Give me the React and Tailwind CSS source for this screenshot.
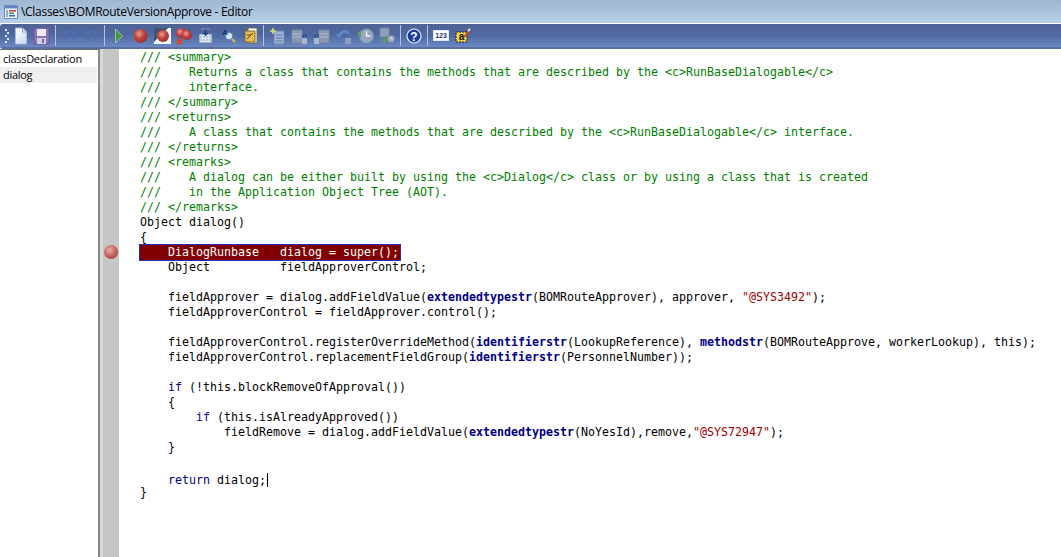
const mono = "font-['DejaVu_Sans_Mono',monospace]"

const G = ({ children }) => <span className="text-[#008000]">{children}</span>
const B = ({ children }) => <span className="font-bold text-[#00008b]">{children}</span>
const K = ({ children }) => <span className="text-[#00008b]">{children}</span>
const S = ({ children }) => <span className="text-[#a00000]">{children}</span>

const doc = [
  '/// <summary>',
  '///    Returns a class that contains the methods that are described by the <c>RunBaseDialogable</c>',
  '///    interface.',
  '/// </summary>',
  '/// <returns>',
  '///    A class that contains the methods that are described by the <c>RunBaseDialogable</c> interface.',
  '/// </returns>',
  '/// <remarks>',
  '///    A dialog can be either built by using the <c>Dialog</c> class or by using a class that is created',
  '///    in the Application Object Tree (AOT).',
  '/// </remarks>',
]

function Ball({ x = 0, y = 0, r = 6 }) {
  return <circle cx={x} cy={y} r={r} fill="url(#ball)" />
}

function Icon({ w = 16, className = '', children }) {
  return (
    <svg width={w} height="20" viewBox={`0 0 ${w} 20`} className={`shrink-0 ${className}`}>
      {children}
    </svg>
  )
}

const Sep = ({ className = '' }) => <div className={`h-[21px] w-px shrink-0 bg-[#b7c3da] ${className}`} />

function Toolbar() {
  return (
    <div className="flex h-[25px] shrink-0 items-center rounded-l-[3px] border-b-2 border-[#5a6f9f] bg-gradient-to-b from-[#4e6295] via-[#4f69a2] to-[#6c89c6]">
      <svg width="0" height="0" className="absolute">
        <defs>
          <radialGradient id="ball" cx="0.4" cy="0.35" r="0.75">
            <stop offset="0" stopColor="#eaa09a" />
            <stop offset="0.45" stopColor="#c4443f" />
            <stop offset="1" stopColor="#8f2a2a" />
          </radialGradient>
          <linearGradient id="page" x1="0" y1="0" x2="1" y2="1">
            <stop offset="0" stopColor="#ffffff" />
            <stop offset="1" stopColor="#c6d6f0" />
          </linearGradient>
        </defs>
      </svg>
      <svg width="7" height="20" viewBox="0 0 7 20" className="ml-[4px] shrink-0">
        <path d="M1 3h2v2H1zM3 6h2v2H3zM1 9h2v2H1zM3 12h2v2H3zM1 15h2v2H1z" fill="#dfe7f5" />
      </svg>
      <Icon w={14} className="ml-[3px]"><path d="M1.500 2h7l4 4v12h-11z" fill="url(#page)" stroke="#aebfdc" /><path d="M8.500 2v4h4" fill="#dbe6f6" stroke="#8ea5c8" /></Icon>
      <Icon w={17} className="ml-[5px]"><path d="M1 2h15v16H1z" fill="#8c74b4" stroke="#6d5a98" /><path d="M4 3h9v7H4z" fill="#f0ecf6" /><path d="M4 12h9v6H4z" fill="#d4cce2" /><path d="M9 13h2v4H9z" fill="#7c68a2" /></Icon>
      <Sep className="ml-[5px]" />
      <Icon w={15} className="ml-[6px]"><path d="M4.500 13c-4-4 0-9 4-8 4 1 5 6 1 10" fill="none" stroke="#4b6fae" strokeWidth="2.200" /><path d="M1 6l6 1-4 5z" fill="#4b6fae" /></Icon>
      <Icon w={15} className="ml-[7px]"><path d="M10.500 13c4-4 0-9-4-8-4 1-5 6-1 10" fill="none" stroke="#4b6fae" strokeWidth="2.200" /><path d="M14 6l-6 1 4 5z" fill="#4b6fae" /></Icon>
      <Sep className="ml-[5px]" />
      <Icon w={10} className="ml-[9px]"><path d="M1.500 3l7 7-7 7z" fill="#3f9a48" stroke="#b5cf9c" strokeWidth="0.800" /></Icon>
      <Icon w={15} className="ml-[9px]"><Ball x={7.500} y={10} r={7} /></Icon>
      <Icon w={17} className="ml-[6px]"><path d="M0 2h17v16H0z" fill="#f6f8fb" /><path d="M0 2h14L0 16z" fill="#44526e" /><Ball x={9} y={10} r={6} /></Icon>
      <Icon w={18} className="ml-[4px]"><Ball x={6} y={7} r={5} /><Ball x={12} y={9} r={5} /><path d="M2 13l5 5M7 13l-5 5" stroke="#ec3c18" strokeWidth="1.800" /></Icon>
      <Icon w={15} className="ml-[5px]"><path d="M1 8h13v9H1z" fill="#dfe8f5" stroke="#6a80a8" /><path d="M2 11h11M2 14h11" stroke="#8ea4c8" strokeDasharray="2 1" /><path d="M7.500 3v7M5 7.500h5" stroke="#1f3c80" strokeWidth="1.400" /><path d="M3 3h9" stroke="#7e93b8" /></Icon>
      <Icon w={17} className="ml-[7px]"><circle cx="9" cy="10" r="3.700" fill="#d6e6f8" stroke="#5d83bd" strokeWidth="1.200" /><path d="M12 13l3 3" stroke="#d8b45a" strokeWidth="2.400" /><text x="5" y="9" textAnchor="middle" fontSize="8" fontWeight="700" fill="#10307c" fontFamily="Liberation Sans, sans-serif">A</text></Icon>
      <Icon w={16} className="ml-[6px]"><path d="M5 2h9v15H5z" fill="#fff" stroke="#7e7048" /><path d="M2 5h10v11H2z" fill="#e2bc56" stroke="#84641e" /><path d="M4 13l6-6M4 9h4" stroke="#6a4c10" /></Icon>
      <Sep className="ml-[4px]" />
      <Icon w={16} className="ml-[5px]"><path d="M5 5h10v13H5z" fill="#9fb3d4" stroke="#6f86ae" /><path d="M7 9h6M7 12h6M7 15h6" stroke="#5f769f" /><path d="M4 2v6M1 5h6" stroke="#d3dc7a" strokeWidth="1.600" /></Icon>
      <Icon w={17} className="ml-[6px]"><path d="M1 4h10v13H1z" fill="#8a98b2" stroke="#76849f" /><path d="M1 8h10M1 11h10" stroke="#b0bace" /><path d="M11 12h5v6h-5z" fill="#a9b6cf" /><path d="M12 12V9h3v3" fill="none" stroke="#2f4c88" strokeWidth="1.200" /></Icon>
      <Icon w={17} className="ml-[5px]"><path d="M6 4h10v13H6z" fill="#8a98b2" stroke="#76849f" /><path d="M6 8h10M6 11h10" stroke="#b0bace" /><path d="M1 12h5v6H1z" fill="#a9b6cf" /><path d="M2 12V9h3v3" fill="none" stroke="#2f4c88" strokeWidth="1.200" /></Icon>
      <Icon w={16} className="ml-[6px]"><path d="M3.500 10c1-5 7-6 10-2" fill="none" stroke="#5d88c8" strokeWidth="2.600" /><path d="M0 8l6 0-3 5z" fill="#5d88c8" /><path d="M9 12h6v6H9z" fill="#8fa0bc" /></Icon>
      <Icon w={17} className="ml-[5px]"><circle cx="9.500" cy="10" r="7" fill="#95a6bf" stroke="#7f9aa0" /><path d="M9.500 5v5h4" stroke="#eef2f8" strokeWidth="1.400" fill="none" /><path d="M0 8l4-4v8z" fill="#5f9a66" /></Icon>
      <Icon w={17} className="ml-[5px]"><path d="M1 2h9v9H1z" fill="#8f9db6" stroke="#7988a4" /><path d="M5.500 10v5M2.500 12.500l3 4 3-4" stroke="#5f9a66" strokeWidth="1.800" fill="none" /><circle cx="12" cy="13" r="4" fill="#9aa8c0" stroke="#6e7d98" /><path d="M12 11v2h2" stroke="#e8ecf4" fill="none" /></Icon>
      <Sep className="ml-[4px]" />
      <Icon w={16} className="ml-[5px]">
        <circle cx="8" cy="10" r="7" fill="#1d3d9f" stroke="#e6ecf8" strokeWidth="1.200" />
        <text x="8" y="14.500" textAnchor="middle" fontSize="12" fontWeight="700" fill="#fff" fontFamily="Liberation Sans, sans-serif">?</text>
      </Icon>
      <Sep className="ml-[5px]" />
      <div className="ml-[5px] flex h-[11px] w-[16px] shrink-0 items-center justify-center border border-[#e0e6f2] bg-white font-['Liberation_Sans',sans-serif] text-[7px] leading-none font-bold text-[#20366e]">123</div>
      <Icon w={17} className="ml-[6px]"><path d="M1 6h11v10H1z" fill="#ecd24e" stroke="#1a1a1a" strokeDasharray="2 1" /><text x="6.500" y="14" textAnchor="middle" fontSize="10" fontWeight="700" fill="#111" fontFamily="Liberation Sans, sans-serif">a</text><path d="M9 11l6-6" stroke="#c24a30" strokeWidth="2.200" /><path d="M13 5l2-2" stroke="#f4e8c0" strokeWidth="2" /></Icon>
    </div>
  )
}

export default function App() {
  return (
    <div className="flex h-[557px] w-[1061px] flex-col overflow-hidden bg-white">
      <div className="flex h-[23px] shrink-0 items-center bg-gradient-to-b from-[#9fb6d2] to-[#b9d0ea] pl-[3px]">
        <svg width="16" height="16" viewBox="0 0 16 16" className="shrink-0">
          <path d="M1.500 1.500h13v13h-13z" fill="#eef3fb" stroke="#6f89b8" />
          <path d="M2 2h12v2.500H2z" fill="#5f86c8" />
          <path d="M3 6h2v7H3z" fill="#8fb0dc" />
          <path d="M6 6h7v1.500H6z" fill="#c83c3c" />
          <path d="M6 8.500h5V10H6z" fill="#3c9c48" />
          <path d="M6 11h6v1.500H6z" fill="#3c64c8" />
        </svg>
        <span className="ml-[2px] font-['Open_Sans',sans-serif] text-[12px] tracking-[-0.3px] text-black">\Classes\BOMRouteVersionApprove - Editor</span>
      </div>
      <div className="h-px shrink-0 bg-white" />
      <Toolbar />
      <div className="flex min-h-0 flex-1">
        <div className="h-full w-[100px] shrink-0 border-t border-r-2 border-[#8a8a8a] border-t-[#6d6d6d] pt-[1px] font-['Open_Sans',sans-serif] text-[11px] leading-[16px] tracking-[-0.3px] text-black">
          <div className="pl-[3px]">classDeclaration</div>
          <div className="mr-[1px] bg-[#f0f0f0] pl-[3px]">dialog</div>
        </div>
        <div className="flex h-full w-[19px] shrink-0 flex-col items-center border-l-[3px] border-[#d8d8d8] bg-[#c6c6c6]">
          <div className="mt-[196px] -ml-[1px] h-[14px] w-[14px] rounded-full bg-[radial-gradient(circle_at_40%_35%,#e8b0a8,#c05a58_55%,#8a3838)]" />
        </div>
        <div className={`${mono} min-w-0 flex-1 pt-[1px] pl-[21px] text-[11.63px] leading-[15px] whitespace-pre text-black`}>
          {doc.map((line) => <div key={line} className="h-[15px]"><G>{line}</G></div>)}
          <div className="h-[15px]">Object dialog()</div>
          <div className="h-[15px]">{'{'}</div>
          <div className="h-[15px]">
            <span className="-mt-px -ml-px inline-block h-[17px] w-[262px] border border-[#2a2ac0] bg-[#800000] align-top leading-[15px] text-white">{'    DialogRunbase   dialog = super();'}</span>
          </div>
          <div className="h-[15px]">{'    Object          fieldApproverControl;'}</div>
          <div className="h-[15px]" />
          <div className="h-[15px]">{'    fieldApprover = dialog.addFieldValue('}<B>extendedtypestr</B>{'(BOMRouteApprover), approver, '}<S>"@SYS3492"</S>{');'}</div>
          <div className="h-[15px]">{'    fieldApproverControl = fieldApprover.control();'}</div>
          <div className="h-[15px]" />
          <div className="h-[15px]">{'    fieldApproverControl.registerOverrideMethod('}<B>identifierstr</B>{'(LookupReference), '}<B>methodstr</B>{'(BOMRouteApprove, workerLookup), this);'}</div>
          <div className="h-[15px]">{'    fieldApproverControl.replacementFieldGroup('}<B>identifierstr</B>{'(PersonnelNumber));'}</div>
          <div className="h-[15px]" />
          <div className="h-[15px]">{'    '}<K>if</K>{' (!this.blockRemoveOfApproval())'}</div>
          <div className="h-[15px]">{'    {'}</div>
          <div className="h-[15px]">{'        '}<K>if</K>{' (this.isAlreadyApproved())'}</div>
          <div className="h-[15px]">{'            fieldRemove = dialog.addFieldValue('}<B>extendedtypestr</B>{'(NoYesId),remove,'}<S>"@SYS72947"</S>{');'}</div>
          <div className="h-[15px]">{'    }'}</div>
          <div className="h-[15px]" />
          <div className="h-[15px]">{'    '}<K>return</K>{' dialog;'}<span className="ml-px inline-block h-[14px] w-px translate-y-[3px] bg-black" /></div>
          <div className="h-[15px]">{'}'}</div>
        </div>
      </div>
    </div>
  )
}
